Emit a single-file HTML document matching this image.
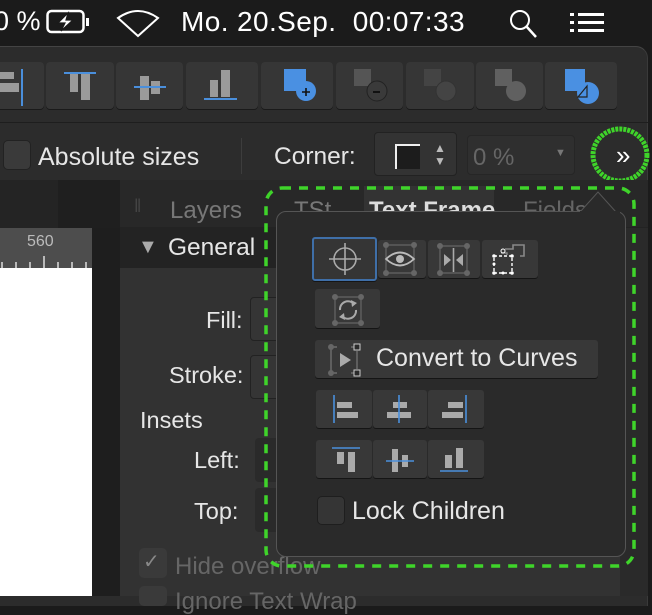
<!DOCTYPE html>
<html><head><meta charset="utf-8"><style>
*{margin:0;padding:0;box-sizing:border-box}
body{width:652px;height:596px;overflow:hidden;background:#1b1b1b;font-family:"Liberation Sans",sans-serif;color:#e6e6e6;position:relative}
.a{position:absolute}
.btn{position:absolute;background:#363636;border-radius:4px;box-shadow:0 1px 0 #1a1a1a}
.t{position:absolute;white-space:nowrap;line-height:1}
.pb{position:absolute;background:#383838;border-radius:3px;box-shadow:0 1px 0 #151515}
</style></head><body>
<!-- menu bar -->
<div class="t" style="left:-6px;top:8px;font-size:27px;color:#fff">0 %</div>
<svg class="a" style="left:46px;top:9px" width="46" height="26"><rect x="1.5" y="2" width="36" height="21" rx="4" fill="none" stroke="#fff" stroke-width="2.5"/><rect x="40" y="9" width="3" height="8" fill="#fff"/><path d="M22 4 L12 14 H19 L15 22 L27 11 H20 Z" fill="#fff" stroke="#1b1b1b" stroke-width="1.2"/></svg>
<svg class="a" style="left:115px;top:8px" width="46" height="30"><path d="M3 10 Q23 -4 43 10 L23 28 Z" fill="none" stroke="#fff" stroke-width="2"/></svg>
<div class="t" style="left:181px;top:8px;font-size:28px;color:#fff;letter-spacing:0.4px">Mo. 20.Sep.&nbsp; 00:07:33</div>
<svg class="a" style="left:508px;top:8px" width="32" height="32"><circle cx="12" cy="12" r="9" fill="none" stroke="#fff" stroke-width="2"/><path d="M18.5 18.5 L28 29" stroke="#fff" stroke-width="2.5"/></svg>
<svg class="a" style="left:568px;top:12px" width="40" height="22"><g fill="#fff"><rect x="2" y="1" width="4" height="3"/><rect x="10" y="1" width="26" height="3"/><rect x="2" y="9" width="4" height="3"/><rect x="10" y="9" width="26" height="3"/><rect x="2" y="17" width="4" height="3"/><rect x="10" y="17" width="26" height="3"/></g></svg>
<!-- window -->
<div class="a" style="left:0;top:46px;width:648px;height:560px;background:#2c2c2c;border-radius:0 12px 0 0;border-top:1px solid #444;border-right:1px solid #3a3a3a"></div>
<!-- toolbar buttons -->
<div class="btn" style="left:-4px;top:62px;width:48px;height:47px"></div>
<div class="btn" style="left:46px;top:62px;width:68px;height:47px"></div>
<div class="btn" style="left:116px;top:62px;width:67px;height:47px"></div>
<div class="btn" style="left:186px;top:62px;width:72px;height:47px"></div>
<div class="btn" style="left:261px;top:62px;width:72px;height:47px"></div>
<div class="btn" style="left:336px;top:62px;width:67px;height:47px"></div>
<div class="btn" style="left:406px;top:62px;width:68px;height:47px"></div>
<div class="btn" style="left:476px;top:62px;width:67px;height:47px"></div>
<div class="btn" style="left:545px;top:62px;width:72px;height:47px"></div>
<svg class="a" style="left:0;top:0" width="652" height="120">
<g fill="#9a9a9a">
<rect x="0" y="72" width="14" height="7"/><rect x="0" y="83" width="19" height="9"/>
<rect x="70" y="74" width="8" height="18"/><rect x="81" y="74" width="9" height="26"/>
<rect x="140" y="76" width="9" height="24"/><rect x="151" y="81" width="9" height="13"/>
<rect x="210" y="80" width="8" height="17"/><rect x="221" y="70" width="9" height="27"/>
</g>
<g stroke="#4a8fdc" stroke-width="2"><path d="M22 69 V106"/><path d="M64 73 H96"/><path d="M134 87 H166"/><path d="M204 99 H237"/></g>
<rect x="284" y="69" width="22" height="22" fill="#4a90e2"/><circle cx="306" cy="91" r="10" fill="#4a90e2"/><path d="M302 92h8M306 88v8" stroke="#111" stroke-width="1.6"/>
<rect x="354" y="69" width="17" height="17" fill="#555"/><circle cx="377" cy="91" r="10" fill="#3a3a3a" stroke="#222"/><path d="M373 92h7" stroke="#111" stroke-width="2"/>
<rect x="424" y="69" width="17" height="17" fill="#444"/><circle cx="446" cy="91" r="10" fill="#444" stroke="#333"/>
<rect x="495" y="69" width="17" height="17" fill="#606060"/><circle cx="516" cy="91" r="10" fill="#606060"/>
<rect x="565" y="69" width="20" height="22" fill="#4a90e2"/><circle cx="588" cy="93" r="11" fill="#4a90e2"/><path d="M578 97 L587 86 V97 Z" fill="none" stroke="#222" stroke-width="1.2"/>
</svg>
<div class="a" style="left:0;top:122px;width:648px;height:1px;background:#1e1e1e"></div>
<!-- second row -->
<div class="a" style="left:3px;top:140px;width:28px;height:30px;background:#3a3a3a;border:1px solid #222;border-radius:5px"></div>
<div class="t" style="left:38px;top:145px;font-size:25px">Absolute sizes</div>
<div class="a" style="left:241px;top:138px;width:1px;height:36px;background:#3d3d3d"></div>
<div class="t" style="left:274px;top:145px;font-size:24.5px">Corner:</div>
<div class="a" style="left:374px;top:132px;width:83px;height:44px;background:#333;border:1px solid #222;border-radius:4px"></div>
<div class="a" style="left:395px;top:144px;width:25px;height:25px;background:#1c1c1c;border-left:2px solid #eee;border-top:2px solid #eee"></div>
<div class="t" style="left:434px;top:142px;font-size:12px;color:#bbb;line-height:13px">▲<br>▼</div>
<div class="a" style="left:467px;top:135px;width:108px;height:40px;background:#2f2f2f;border:1px solid #262626;border-radius:4px"></div>
<div class="t" style="left:473px;top:146px;font-size:24px;color:#666">0 %</div>
<div class="t" style="left:555px;top:148px;font-size:11px;color:#777">▼</div>
<div class="t" style="left:616px;top:142px;font-size:26px;color:#fff">»</div>
<svg class="a" style="left:588px;top:124px" width="64" height="62"><ellipse cx="32" cy="31" rx="27" ry="26" fill="none" stroke="#3fd42a" stroke-width="5" stroke-dasharray="3 1"/></svg>
<!-- canvas -->
<div class="a" style="left:0;top:180px;width:120px;height:48px;background:#1f1f1f"></div>
<div class="a" style="left:0;top:180px;width:58px;height:48px;background:#242424"></div>
<div class="a" style="left:0;top:228px;width:92px;height:40px;background:#4d4d4d"></div>
<div class="t" style="left:27px;top:234px;font-size:16px;color:#bbb">560</div>
<svg class="a" style="left:0;top:256px" width="106" height="12"><g stroke="#ddd" stroke-width="1.5"><path d="M2 6v6M16 6v6M30 6v6M44 0v12M58 6v6M72 6v6M86 6v6M101 4v8"/></g></svg>
<div class="a" style="left:0;top:268px;width:92px;height:328px;background:#fff"></div>
<div class="a" style="left:92px;top:228px;width:28px;height:368px;background:#1e1e1e"></div>
<!-- panel -->
<div class="a" style="left:120px;top:180px;width:528px;height:416px;background:#323232"></div>
<div class="a" style="left:120px;top:180px;width:528px;height:48px;background:#282828"></div>
<div class="a" style="left:120px;top:227px;width:528px;height:41px;background:#232323"></div>
<div class="t" style="left:134px;top:197px;font-size:18px;color:#444">‖</div>
<div class="t" style="left:170px;top:199px;font-size:24px;color:#777">Layers</div>
<div class="t" style="left:294px;top:199px;font-size:24px;color:#777">TSt</div>
<div class="a" style="left:364px;top:186px;width:130px;height:40px;background:#333"></div>
<div class="t" style="left:369px;top:199px;font-size:24px;color:#ddd;font-weight:bold">Text Frame</div>
<div class="t" style="left:523px;top:199px;font-size:24px;color:#666">Fields</div>
<div class="t" style="left:138px;top:237px;font-size:20px;color:#aaa">▼</div>
<div class="t" style="left:168px;top:236px;font-size:24.5px">General</div>
<div class="t" style="left:206px;top:309px;font-size:23.5px">Fill:</div>
<div class="t" style="left:169px;top:364px;font-size:23.5px">Stroke:</div>
<div class="t" style="left:140px;top:409px;font-size:23.5px">Insets</div>
<div class="t" style="left:194px;top:449px;font-size:23.5px">Left:</div>
<div class="t" style="left:194px;top:500px;font-size:23.5px">Top:</div>
<div class="a" style="left:250px;top:297px;width:30px;height:44px;border:1px solid #222;border-radius:4px;background:#353535"></div>
<div class="a" style="left:250px;top:355px;width:30px;height:44px;border:1px solid #222;border-radius:4px;background:#353535"></div>
<div class="a" style="left:255px;top:438px;width:25px;height:44px;border-radius:4px;background:#2a2a2a"></div>
<div class="a" style="left:255px;top:488px;width:25px;height:44px;border-radius:4px;background:#2a2a2a"></div>
<div class="a" style="left:139px;top:548px;width:28px;height:30px;border-radius:5px;background:#3a3a3a"></div>
<div class="t" style="left:143px;top:552px;font-size:20px;color:#888">✓</div>
<div class="t" style="left:175px;top:555px;font-size:24px;color:#666">Hide overflow</div>
<div class="a" style="left:139px;top:586px;width:28px;height:20px;border-radius:5px;background:#3a3a3a"></div>
<div class="t" style="left:175px;top:590px;font-size:24px;color:#666">Ignore Text Wrap</div>
<div class="a" style="left:620px;top:228px;width:28px;height:368px;background:#2a2a2a"></div>
<!-- popover -->
<div class="a" style="left:276px;top:211px;width:350px;height:346px;background:#2a2a2a;border:1px solid #555;border-radius:10px"></div>
<svg class="a" style="left:580px;top:190px" width="40" height="24"><path d="M0 22 L18 2 L36 22" fill="#2a2a2a" stroke="#555" stroke-width="1"/><rect x="0" y="21" width="40" height="4" fill="#2a2a2a"/></svg>
<div class="pb" style="left:378px;top:240px;width:48px;height:38px"></div>
<div class="pb" style="left:428px;top:240px;width:52px;height:38px"></div>
<div class="pb" style="left:482px;top:240px;width:56px;height:38px"></div>
<div class="pb" style="left:312px;top:237px;width:65px;height:44px;border:2px solid #3f6fa8;background:#353535"></div>
<div class="pb" style="left:315px;top:289px;width:65px;height:39px"></div>
<div class="pb" style="left:315px;top:340px;width:283px;height:38px"></div>
<div class="t" style="left:376px;top:346px;font-size:25px">Convert to Curves</div>
<div class="pb" style="left:316px;top:390px;width:56px;height:38px"></div>
<div class="pb" style="left:373px;top:390px;width:54px;height:38px"></div>
<div class="pb" style="left:428px;top:390px;width:56px;height:38px"></div>
<div class="pb" style="left:316px;top:440px;width:56px;height:38px"></div>
<div class="pb" style="left:373px;top:440px;width:54px;height:38px"></div>
<div class="pb" style="left:428px;top:440px;width:56px;height:38px"></div>
<div class="a" style="left:317px;top:496px;width:28px;height:29px;background:#353535;border:1px solid #1e1e1e;border-radius:5px"></div>
<div class="t" style="left:352px;top:499px;font-size:25px">Lock Children</div>
<svg class="a" style="left:0;top:0" width="652" height="596">
<g stroke="#aaa" stroke-width="1.6" fill="none">
<circle cx="345" cy="259" r="11"/><path d="M329 259h32M345 243v32"/>
</g>
<path d="M386 245h28v28h-28z" stroke="#666" stroke-width="1.2" fill="none"/>
<g fill="#666"><circle cx="386" cy="245" r="3"/><circle cx="414" cy="245" r="3"/><circle cx="386" cy="273" r="3"/><circle cx="414" cy="273" r="3"/></g>
<path d="M386 259 Q400 246 414 259 Q400 272 386 259Z" fill="#383838" stroke="#bbb" stroke-width="1.8"/>
<circle cx="400" cy="259" r="4" fill="#bbb"/>
<path d="M440 246h27v27h-27z" stroke="#666" stroke-width="1.2" fill="none"/>
<g fill="#666"><circle cx="440" cy="246" r="3"/><circle cx="467" cy="246" r="3"/><circle cx="440" cy="273" r="3"/><circle cx="467" cy="273" r="3"/></g>
<path d="M453.5 248v24" stroke="#aaa" stroke-width="1.6"/>
<path d="M444 254 L451 260 L444 266Z M463 254 L456 260 L463 266Z" fill="#aaa"/>
<path d="M505 249h8v-4h11v11h-4" stroke="#888" stroke-width="1.6" fill="none"/>
<path d="M501 253h6v2" stroke="#888" stroke-width="1.4" fill="none"/>
<rect x="494" y="256" width="18" height="17" fill="none" stroke="#fff" stroke-width="1.4" stroke-dasharray="3 2"/>
<g fill="#fff"><circle cx="494" cy="256" r="1.8"/><circle cx="512" cy="256" r="1.8"/><circle cx="494" cy="273" r="1.8"/><circle cx="512" cy="273" r="1.8"/><circle cx="503" cy="273" r="1.5"/><circle cx="494" cy="264" r="1.5"/></g>
<circle cx="503" cy="251" r="2" fill="none" stroke="#fff" stroke-width="1"/>
<path d="M335 297h26v26h-26z" stroke="#666" stroke-width="1.2" fill="none"/>
<g fill="#666"><circle cx="335" cy="297" r="3"/><circle cx="361" cy="297" r="3"/><circle cx="335" cy="323" r="3"/><circle cx="361" cy="323" r="3"/></g>
<path d="M340 310 A8 8 0 0 1 354 304 M356 310 A8 8 0 0 1 342 316" stroke="#aaa" stroke-width="2" fill="none"/>
<path d="M351 300 L357 303 L352 307Z M345 320 L339 317 L344 313Z" fill="#aaa"/>
<path d="M331 347v26M331 347h6M331 373h6M357 351v18M351 347h3M351 373h3" stroke="#777" stroke-width="1.2" fill="none"/>
<g fill="#666"><circle cx="331" cy="347" r="3"/><circle cx="331" cy="373" r="3"/></g>
<rect x="354" y="344" width="6" height="6" fill="#2a2a2a" stroke="#ccc" stroke-width="1"/>
<rect x="354" y="370" width="6" height="6" fill="#2a2a2a" stroke="#ccc" stroke-width="1"/>
<path d="M340 353 L351 360 L340 367Z" fill="#aaa"/>
<g fill="#aaa">
<rect x="337" y="402" width="15" height="6"/><rect x="337" y="412" width="21" height="6"/>
<rect x="393" y="402" width="14" height="6"/><rect x="387" y="412" width="24" height="6"/>
<rect x="448" y="402" width="15" height="6"/><rect x="442" y="412" width="21" height="6"/>
<rect x="337" y="452" width="7" height="12"/><rect x="348" y="452" width="7" height="20"/>
<rect x="392" y="449" width="6" height="23"/><rect x="402" y="455" width="6" height="12"/>
<rect x="445" y="455" width="7" height="13"/><rect x="456" y="448" width="7" height="20"/>
</g>
<g stroke="#4a8fdc" stroke-width="1.6">
<path d="M334 395v28M399 395v28M466 395v28M332 448h28M386 461h28M440 471h28"/>
</g>
<rect x="266" y="188" width="368" height="378" rx="16" fill="none" stroke="#3fd42a" stroke-width="3.5" stroke-dasharray="9 8"/>
</svg>
</body></html>
